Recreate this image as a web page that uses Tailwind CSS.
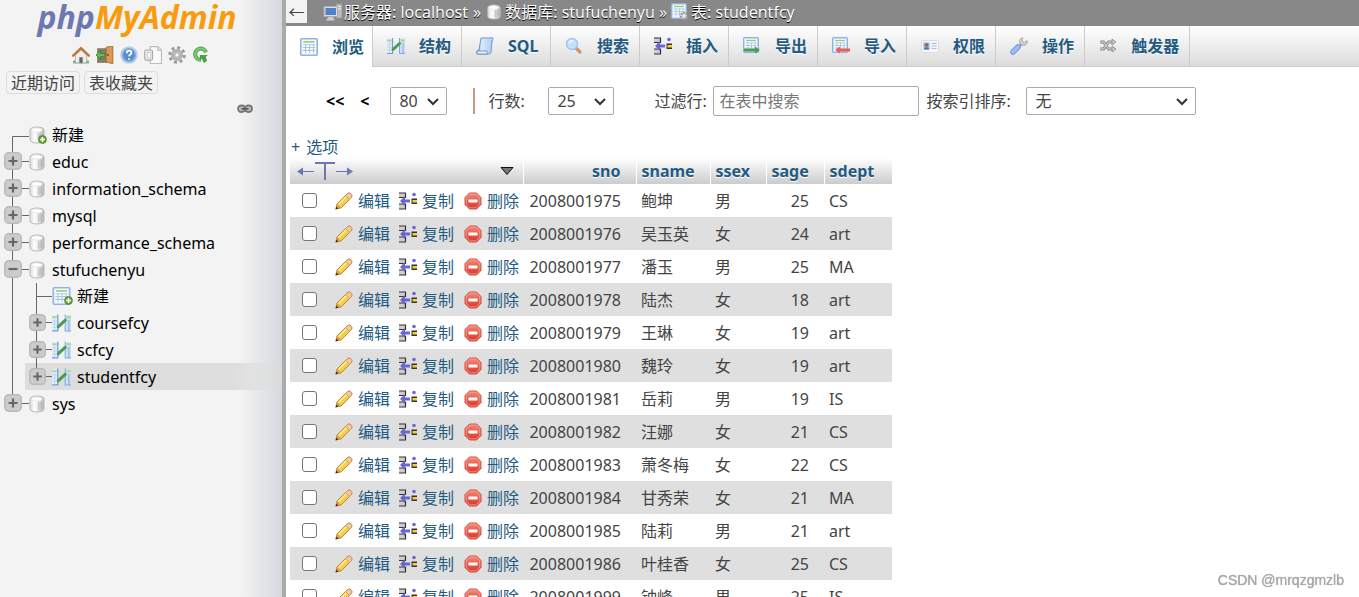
<!DOCTYPE html>
<html lang="zh-CN">
<head>
    <meta charset="UTF-8">
    <meta name="viewport" content="width=device-width, initial-scale=1.0">
    <title>localhost / stufuchenyu / studentfcy | phpMyAdmin</title>
    <script src="https://cdn.jsdelivr.net/npm/@tailwindcss/browser@4"></script>
    <style>
        body {
            font-family: 'Noto Sans', 'Noto Sans CJK SC', sans-serif;
        }
        .crumb {
            text-shadow: 0 1px 0 #000;
        }
        .light {
            text-shadow: 0 1px 0 #fff;
        }
        .watermark {
            font-family: 'Liberation Sans', sans-serif;
            text-shadow: 0 0 1px #999;
        }
    </style>
</head>
<body class="bg-white text-base leading-6 text-[#444]">
    <!-- Icon sprite -->
    <svg class="absolute size-0">
        <defs>
            <linearGradient id="g-cyl"><stop offset="0" stop-color="#dcdcdc"/><stop offset=".35" stop-color="#fff"/><stop offset="1" stop-color="#b4b4b4"/></linearGradient>
            <linearGradient id="g-red" x2="0" y2="1"><stop offset="0" stop-color="#f58a78"/><stop offset="1" stop-color="#d93324"/></linearGradient>
            <linearGradient id="g-page"><stop offset="0" stop-color="#6b9bdc"/><stop offset=".3" stop-color="#dcebfb"/><stop offset="1" stop-color="#a9cbf2"/></linearGradient>
        </defs>
        <symbol id="i-home" viewBox="0 0 16 16">
            <path d="M1 13h14v2.500H1z" fill="#6db56a"/><path d="M3 8l5-5 5 5v7H3z" fill="#eee" stroke="#999" stroke-width=".6"/><path d="M6.500 10h3v5h-3z" fill="#666"/><path d="M1 8.500L8 2l7 6.500" fill="none" stroke="#ba7a3b" stroke-width="2.200" stroke-linecap="round"/>
        </symbol>
        <symbol id="i-exit" viewBox="0 0 16 16">
            <path d="M1 2h9v13H1z" fill="#8b7965"/><path d="M9 1l6-1v16l-6-2z" fill="#d89a56" stroke="#9d6427" stroke-width=".7"/><circle cx="10.500" cy="8" r=".8" fill="#6b4315"/><path d="M0 8l4-4v2.500h4v3H4V12z" fill="#5dbb59" stroke="#2e7d32" stroke-width=".7"/>
        </symbol>
        <symbol id="i-help" viewBox="0 0 16 16">
            <circle cx="8" cy="8" r="7" fill="#7fa9de" stroke="#b4cdec" stroke-width="1.500"/><circle cx="8" cy="8" r="5" fill="#5a8ccc"/><path d="M6 6.500c0-3 4.200-3 4.200-.5 0 1.500-2.200 1.500-2.200 3.200M8 10.800v1.400" fill="none" stroke="#fff" stroke-width="1.600"/>
        </symbol>
        <symbol id="i-docs" viewBox="0 0 16 16">
            <path d="M5.500.5h7l3 3v12h-10z" fill="#fafafa" stroke="#bbb"/><path d="M12 .5v3.500h3.500" fill="#ddd" stroke="#bbb" stroke-width=".7"/><rect x=".6" y="3.500" width="7" height="9" rx="1.500" fill="#eee" stroke="#aaa"/><path d="M3 5.500h3v5H3z" fill="#fff" stroke="#bbb" stroke-width=".7"/>
        </symbol>
        <symbol id="i-gear" viewBox="0 0 16 16">
            <circle cx="8" cy="8" r="6.500" fill="none" stroke="#999" stroke-width="2.600" stroke-dasharray="2.600 2.500"/><circle cx="8" cy="8" r="4" fill="#eee" stroke="#b2b2b2" stroke-width="2.800"/><circle cx="8" cy="8" r="2" fill="#fafafa" stroke="#888" stroke-width=".7"/>
        </symbol>
        <symbol id="i-reload" viewBox="0 0 16 16">
            <path d="M12.500 5.500A5 5 0 1 0 8 12.300" fill="none" stroke="#4fa34c" stroke-width="3.600"/><path d="M12.500 5.500A5 5 0 1 0 8 12.300" fill="none" stroke="#7fcb7a" stroke-width="1.800"/><path d="M7 8h7l-1.800 1.800 1.300 3.200-3 2-1.700-3.600L7 13z" fill="#49a046"/>
        </symbol>
        <symbol id="i-link" viewBox="0 0 16 10">
            <rect x="1" y="1.500" width="7" height="6.500" rx="3.200" fill="#bbb" stroke="#777" stroke-width="1.800"/><rect x="8" y="1.500" width="7" height="6.500" rx="3.200" fill="#bbb" stroke="#777" stroke-width="1.800"/><path d="M4.500 4.800h7" stroke="#555" stroke-width="1.600"/>
        </symbol>
        <symbol id="i-db" viewBox="0 0 16 18">
            <path d="M1 4c0-4 14-4 14 0v10c0 4-14 4-14 0z" fill="url(#g-cyl)" stroke="#b9b9b9"/><ellipse cx="8" cy="4" rx="5.500" ry="2" fill="#fff" stroke="#ddd" stroke-width=".6"/><path d="M9 7.500h1.500v7H9zM11.500 7H13v7h-1.500z" fill="#aaa" opacity=".5"/>
        </symbol>
        <symbol id="i-add" viewBox="0 0 10 10">
            <circle cx="5" cy="5" r="4.400" fill="#6a9f3e" stroke="#4b7d26" stroke-width=".8"/><path d="M5 2.300v5.400M2.300 5h5.400" stroke="#fff" stroke-width="1.700"/>
        </symbol>
        <symbol id="i-table" viewBox="0 0 16 16">
            <rect x=".6" y=".6" width="14.800" height="14.800" rx="1" fill="#d4e4f8" stroke="#8db2e3" stroke-width="1.200"/><path d="M2 2h12v12H2z" fill="#fff"/><path d="M3 3.500h10" stroke="#93cf7b" stroke-width="1.500"/><path d="M2.500 6h11M2.500 8.500h11M2.500 11h11M5 5.500v8M8.500 5.500v8M12 5.500v8" stroke="#a7c3e6" stroke-width=".9"/>
        </symbol>
        <symbol id="i-struct" viewBox="0 0 18 16">
            <path d="M0 .5h6v15H0z" fill="#e6f0fc"/><path d="M5.500 0v15.500M0 15.500h6" stroke="#6c9be0" stroke-width="1.200"/><path d="M12.500.5H18v15h-5.500z" fill="#cfe0f7"/><path d="M12.500 0v15.500H18M16 5v10" stroke="#7fa8e2" fill="none"/><path d="M0 2.500h4.500M13.500 2.500H18" stroke="#a4dc93" stroke-width="2"/><path d="M0 6h5M0 9h5M0 12h5M2.500 4v11M13 6h5M13 9h5" stroke="#b8cfeb" stroke-width=".8"/><path d="M6 11.500l6.500-6" stroke="#4f9b4d" stroke-width="3" stroke-linecap="round"/>
        </symbol>
        <symbol id="i-sql" viewBox="0 0 18 18">
            <path d="M5 1h12l-1 3-1 11c0 2-2 2-3 2H1c-1-2 0-4 2-4z" fill="url(#g-page)" stroke="#6b97d2"/><path d="M1 14h10c0 2 1 3 1 3H1z" fill="#e7f2fd" stroke="#6b97d2"/><path d="M15 1c2 0 2.500 3 1 3" fill="#fff" stroke="#6b97d2"/>
        </symbol>
        <symbol id="i-search" viewBox="0 0 18 18">
            <path d="M11 11l4 4" stroke="#c99a6b" stroke-width="3.200" stroke-linecap="round"/><circle cx="7" cy="7" r="5.500" fill="#c6e0fb" stroke="#a3c3ec" stroke-width="1.400"/><path d="M4 6.500c.5-2 2-3 4-2.500" stroke="#fff" stroke-width="1.300" fill="none"/>
        </symbol>
        <symbol id="i-insert" viewBox="0 0 18 18">
            <path d="M0 1h6.500v4.500H0M0 12h6.500v5H0" fill="#ccc"/><path d="M0 1h6.500v4.500H0M0 12h6.500v5H0" fill="none" stroke="#333" stroke-width="1.200"/><path d="M1 9l5-5v3.500h5v3H6V14z" fill="#6c66d2"/><circle cx="15" cy="2.500" r="1.800" fill="#6c66d2"/><path d="M12.500 6.500H18v5.500h-5.500z" fill="#333"/><path d="M13.500 8H18v2.500h-4.500z" fill="#fc3"/>
        </symbol>
        <symbol id="i-edit" viewBox="0 0 18 18">
            <path d="M1 16.500L2 12 12 2c3-2.500 6.500 1 4 4L6 16z" fill="#f3cf4b" stroke="#bb862c"/><path d="M3.500 12.500L12.500 3.500" stroke="#fff0a0" stroke-width="1.500"/><path d="M12 2c3-2.500 6.500 1 4 4l-1.500 1.500-4-4z" fill="#f1c89f" stroke="#c88d58" stroke-width=".7"/><path d="M.5 17.500L2 12l4.500 4z" fill="#d6a052"/><path d="M.5 17.500l.8-3 2.300 2.200z" fill="#4b3213"/>
        </symbol>
        <symbol id="i-drop" viewBox="0 0 18 18">
            <path d="M5.500 1h7L17 5.500v7L12.500 17h-7L1 12.500v-7z" fill="url(#g-red)" stroke="#cf5145"/><path d="M6 2.200h6l3.800 3.800v6L12 15.800H6L2.200 12V6z" fill="none" stroke="#f7a59a" stroke-width=".8"/><path d="M4.500 7.500h9v3h-9z" fill="#fff"/>
        </symbol>
        <symbol id="i-export" viewBox="0 0 18 18">
            <use href="#i-table" width="16" height="16"/><path d="M1 11.500h11V9.500l5 3.500-5 3.500v-2H1z" fill="#4f9c4d"/>
        </symbol>
        <symbol id="i-import" viewBox="0 0 18 18">
            <use href="#i-table" width="16" height="16"/><path d="M18 11.500H8v-2L3 13l5 3.500v-2h10z" fill="#ee5c55"/>
        </symbol>
        <symbol id="i-priv" viewBox="0 0 18 18">
            <rect x=".5" y="3.500" width="17" height="12" rx="1" fill="#f6f6f6" stroke="#ddd"/><path d="M2.500 5.500h6v7h-6z" fill="#8ab6ea"/><circle cx="5.500" cy="8" r="1.800" fill="#9a6238"/><path d="M3 12.500c0-3 5-3 5 0z" fill="#4673b5"/><path d="M10.500 6.500h5M10.500 9h5M10.500 11.500h5" stroke="#a9bfdb"/>
        </symbol>
        <symbol id="i-ops" viewBox="0 0 18 18">
            <path d="M9.500 9l3-3" stroke="#aaa" stroke-width="3"/><path d="M13 .8c-3 .3-4 3-3 5.200 1 2.300 4 3 6 1.500 1.200-1 1.500-2.500 1-4l-2.500 2-2-.8-.4-2z" fill="#d3d3d3" stroke="#999" stroke-width=".8"/><path d="M3 15l5-5" stroke="#6e95dc" stroke-width="5.500" stroke-linecap="round"/><path d="M3 15l5-5" stroke="#9fbdf2" stroke-width="3.600" stroke-linecap="round"/>
        </symbol>
        <symbol id="i-trigger" viewBox="0 0 18 18">
            <path d="M1 5h3.500l5 7H14M1 12h3.500l5-7H14" fill="none" stroke="#888" stroke-width="2.800"/><path d="M1 5h3.500l5 7H14M1 12h3.500l5-7H14" fill="none" stroke="#ddd" stroke-width="1"/><path d="M13 2l4 3-4 3zM13 9l4 3-4 3z" fill="#ccc" stroke="#888" stroke-width=".8"/>
        </symbol>
        <symbol id="i-server" viewBox="0 0 20 18">
            <path d="M13 1h6v14h-6z" fill="#bbb" stroke="#999" stroke-width=".8"/><path d="M14 3.500h4M14 6h4" stroke="#eee"/><path d="M1 3.500h13.500v10H1z" fill="#ddd" stroke="#aaa"/><path d="M2.500 5h10.500V12H2.500z" fill="#4f80cb"/><path d="M3 17.500h9l-2-3.500H5.500z" fill="#ccc"/>
        </symbol>
        <symbol id="i-prop" viewBox="0 0 18 18">
            <use href="#i-table" width="16" height="16"/><circle cx="13" cy="13" r="3" fill="#eee" stroke="#999" stroke-width="2.500" stroke-dasharray="1.800 .8"/>
        </symbol>
        <symbol id="box-plus" viewBox="0 0 18 18">
            <rect x=".8" y=".8" width="16.400" height="16.400" rx="4" fill="#ccc" stroke="#b9b9b9" stroke-width="1.500"/><path d="M9 4.500v9M4.500 9h9" stroke="#666" stroke-width="2.200"/>
        </symbol>
        <symbol id="box-minus" viewBox="0 0 18 18">
            <rect x=".8" y=".8" width="16.400" height="16.400" rx="4" fill="#ccc" stroke="#b9b9b9" stroke-width="1.500"/><path d="M4.500 9h9" stroke="#666" stroke-width="2.200"/>
        </symbol>
        <!-- Tree branches: outer level is 25 wide, inner level 27 -->
        <symbol id="t-first" viewBox="0 0 25 27"><path d="M8.500 27V14.500H25" fill="none" stroke="#666"/></symbol>
        <symbol id="t-plus" viewBox="0 0 25 27"><path d="M8.500 0v27M8 13.500h17" fill="none" stroke="#666"/><use href="#box-plus" y="4" width="18" height="18"/></symbol>
        <symbol id="t-minus" viewBox="0 0 25 27"><path d="M8.500 0v27M8 13.500h17" fill="none" stroke="#666"/><use href="#box-minus" y="4" width="18" height="18"/></symbol>
        <symbol id="t-last" viewBox="0 0 25 27"><path d="M8.500 0v13.500H25" fill="none" stroke="#666"/><use href="#box-plus" y="4" width="18" height="18"/></symbol>
        <symbol id="t-pipe" viewBox="0 0 21 27"><path d="M8.500 0v27" stroke="#666"/></symbol>
        <symbol id="t2-tee" viewBox="0 0 27 27"><path d="M11.500 0v27M11 13.500h16" stroke="#666"/></symbol>
        <symbol id="t2-plus" viewBox="0 0 27 27"><path d="M11.500 0v27M11 13.500h16" stroke="#666"/><use href="#box-plus" x="4" y="5" width="17" height="17"/></symbol>
        <symbol id="t2-last" viewBox="0 0 27 27"><path d="M11.500 0v13.500H27" fill="none" stroke="#666"/><use href="#box-plus" x="4" y="5" width="17" height="17"/></symbol>
    </svg>

    <div class="flex h-screen overflow-hidden">
        <!-- Navigation panel -->
        <aside class="w-[286px] shrink-0 border-r-4 border-[#aaa] bg-linear-to-r from-[#f3f3f3] from-85% to-[#d6d9dc]">
            <a href="#" class="block h-[46px] pr-2 text-center text-[32px] leading-[34px] font-bold italic text-[#6c78af]" style="font-family: 'Open Sans', sans-serif">php<span class="text-[#f89c0e]">MyAdmin</span></a>
            <nav class="flex justify-center gap-[6px]">
                <a href="#" aria-label="主页"><svg class="size-[18px]"><use href="#i-home"/></svg></a>
                <a href="#" aria-label="退出"><svg class="size-[18px]"><use href="#i-exit"/></svg></a>
                <a href="#" aria-label="phpMyAdmin 文档"><svg class="size-[18px]"><use href="#i-help"/></svg></a>
                <a href="#" aria-label="文档"><svg class="size-[18px]"><use href="#i-docs"/></svg></a>
                <a href="#" aria-label="设置"><svg class="size-[18px]"><use href="#i-gear"/></svg></a>
                <a href="#" aria-label="刷新"><svg class="size-[18px]"><use href="#i-reload"/></svg></a>
            </nav>
            <div class="mt-[7px] flex gap-1 px-[6px]">
                <button class="h-[23px] rounded border border-[#ddd] px-1 leading-5">近期访问</button>
                <button class="h-[23px] rounded border border-[#ddd] px-1 leading-5">表收藏夹</button>
            </div>
            <div class="mt-[10px] flex justify-end pr-[29px]">
                <button aria-label="链接"><svg class="h-[10px] w-4"><use href="#i-link"/></svg></button>
            </div>
            <ul id="tree" class="mt-2 text-black"></ul>
        </aside>

        <main class="min-w-0 flex-1">
            <!-- Breadcrumb -->
            <div class="crumb flex h-[26px] items-center bg-[#888] pb-[2px] text-white">
                <button class="mb-px h-[23px] w-[21px] bg-[#f3f3f3] leading-4 text-[#444]" style="text-shadow: none">←</button>
                <svg class="ml-4 h-[18px] w-5"><use href="#i-server"/></svg>
                <a href="#" class="ml-px">服务器: localhost</a><span class="mx-[5px]">»</span>
                <svg class="mr-[3px] h-4 w-4"><use href="#i-db"/></svg>
                <a href="#">数据库: stufuchenyu</a><span class="mx-1">»</span>
                <svg class="mr-[2px] size-[18px]"><use href="#i-prop"/></svg>
                <a href="#">表: studentfcy</a>
            </div>

            <!-- Tabs -->
            <nav id="tabs" class="light flex h-[41px] border-b border-[#ccc] bg-linear-to-b from-white to-[#dcdcdc] font-bold text-[#235a81]"></nav>

            <!-- Result navigation -->
            <form class="flex h-[68px] items-center pl-10">
                <button type="button" class="font-bold text-black">&lt;&lt;</button>
                <button type="button" class="ml-4 font-bold text-black">&lt;</button>
                <div class="relative ml-[21px]">
                    <select aria-label="页码" class="h-7 w-[57px] appearance-none rounded-[2px] border border-[#aaa] bg-white pl-2"><option>80</option></select>
                    <svg class="pointer-events-none absolute top-[11px] right-2 h-2 w-3"><path d="M1 1l5 5 5-5" fill="none" stroke="#333" stroke-width="2"/></svg>
                </div>
                <span class="ml-[26px] h-[26px] w-[2px] bg-[#c49a86]"></span>
                <label for="rows" class="ml-[13px] w-[60px]">行数:</label>
                <div class="relative">
                    <select id="rows" class="h-7 w-[66px] appearance-none rounded-[2px] border border-[#aaa] bg-white pl-2"><option>25</option></select>
                    <svg class="pointer-events-none absolute top-[11px] right-2 h-2 w-3"><path d="M1 1l5 5 5-5" fill="none" stroke="#333" stroke-width="2"/></svg>
                </div>
                <label for="filter" class="ml-10 w-[59px]">过滤行:</label>
                <input id="filter" type="text" placeholder="在表中搜索" class="h-[30px] w-[206px] rounded-[2px] border border-[#aaa] px-[5px] placeholder:text-[#777]">
                <label for="sort" class="ml-[7px] w-[100px]">按索引排序:</label>
                <div class="relative">
                    <select id="sort" class="h-7 w-[170px] appearance-none rounded-[2px] border border-[#aaa] bg-white pl-2"><option>无</option></select>
                    <svg class="pointer-events-none absolute top-[11px] right-2 h-2 w-3"><path d="M1 1l5 5 5-5" fill="none" stroke="#333" stroke-width="2"/></svg>
                </div>
            </form>

            <a href="#" class="flex h-[23px] gap-[6px] pl-[5px] text-[#235a81]"><span>+</span>选项</a>

            <!-- Result table -->
            <table class="ml-1 w-[602px] table-fixed">
                <colgroup>
                    <col class="w-[233px]"><col class="w-[113px]"><col class="w-[74px]"><col class="w-[56px]"><col class="w-[58px]"><col class="w-[68px]">
                </colgroup>
                <thead>
                    <tr class="light h-[26px] bg-linear-to-b from-white to-[#ccc] text-left text-[#235a81]">
                        <th class="border-r border-white p-0">
                            <div class="flex items-center justify-between pr-[9px] pl-[7px]">
                                <svg class="h-5 w-14" viewBox="0 0 56 20"><path d="M4 10.500h13M39 10.500h13" stroke="#6c78af"/><path d="M0 10.500l6-4v8zM56 10.500l-6-4v8z" fill="#6c78af"/><path d="M18 2h20M28 2v17" stroke="#6c78af" stroke-width="2"/></svg>
                                <svg class="h-2 w-[14px]" viewBox="0 0 14 8"><path d="M1 .5h12L7 7.500z" fill="#777" stroke="#111"/></svg>
                            </div>
                        </th>
                        <th class="border-r border-white pr-[15px] text-right">sno</th>
                        <th class="border-r border-white pl-[5px]">sname</th>
                        <th class="border-r border-white pl-[5px]">ssex</th>
                        <th class="border-r border-white pl-[5px]">sage</th>
                        <th class="border-r border-white pl-[5px]">sdept</th>
                    </tr>
                </thead>
                <tbody id="rows-body"></tbody>
            </table>
        </main>
    </div>

    <div class="watermark fixed right-[15px] bottom-[7px] text-sm leading-5 text-[#aaa]">CSDN @mrqzgmzlb</div>

    <script>
        const tree = [
            { name: '新建', branch: 't-first', isNew: true },
            { name: 'educ', branch: 't-plus' },
            { name: 'information_schema', branch: 't-plus' },
            { name: 'mysql', branch: 't-plus' },
            { name: 'performance_schema', branch: 't-plus' },
            { name: 'stufuchenyu', branch: 't-minus' },
            { name: '新建', branch: 't2-tee', nested: true, isNew: true },
            { name: 'coursefcy', branch: 't2-plus', nested: true },
            { name: 'scfcy', branch: 't2-plus', nested: true },
            { name: 'studentfcy', branch: 't2-last', nested: true, selected: true },
            { name: 'sys', branch: 't-last' }
        ];
        const tabs = [
            ['浏览', 'i-table'], ['结构', 'i-struct'], ['SQL', 'i-sql'], ['搜索', 'i-search'], ['插入', 'i-insert'],
            ['导出', 'i-export'], ['导入', 'i-import'], ['权限', 'i-priv'], ['操作', 'i-ops'], ['触发器', 'i-trigger']
        ];
        const students = [
            ['2008001975', '鲍坤', '男', 25, 'CS'],
            ['2008001976', '吴玉英', '女', 24, 'art'],
            ['2008001977', '潘玉', '男', 25, 'MA'],
            ['2008001978', '陆杰', '女', 18, 'art'],
            ['2008001979', '王琳', '女', 19, 'art'],
            ['2008001980', '魏玲', '女', 19, 'art'],
            ['2008001981', '岳莉', '男', 19, 'IS'],
            ['2008001982', '汪娜', '女', 21, 'CS'],
            ['2008001983', '萧冬梅', '女', 22, 'CS'],
            ['2008001984', '甘秀荣', '女', 21, 'MA'],
            ['2008001985', '陆莉', '男', 21, 'art'],
            ['2008001986', '叶桂香', '女', 25, 'CS'],
            ['2008001999', '钟峰', '男', 25, 'IS']
        ];

        const addBadge = '<svg class="absolute -right-[2px] bottom-0 size-[9px]"><use href="#i-add"/></svg>';

        document.getElementById('tree').innerHTML = tree.map(n => {
            const height = n.isNew ? 'h-[26px]' : 'h-[27px]';
            const badge = n.isNew ? addBadge : '';
            if (n.nested) {
                const icon = n.isNew ? '#i-table' : '#i-struct';
                return `
                    <li class="flex ${height} overflow-hidden pl-1">
                        <svg class="h-[27px] w-[21px] shrink-0"><use href="#t-pipe"/></svg>
                        <div class="flex flex-1 items-center ${n.selected ? 'bg-linear-to-r from-[#ddd] from-80% to-[#ddd]/30' : ''}">
                            <svg class="h-[27px] w-[27px] shrink-0"><use href="#${n.branch}"/></svg>
                            <span class="relative mr-[6px]"><svg class="h-[18px] w-[19px]"><use href="${icon}"/></svg>${badge}</span>
                            <a href="#">${n.name}</a>
                        </div>
                    </li>`;
            }
            return `
                <li class="flex ${height} items-center overflow-hidden pl-1">
                    <svg class="h-[27px] w-[25px] shrink-0"><use href="#${n.branch}"/></svg>
                    <span class="relative mr-[7px]"><svg class="h-[18px] w-4"><use href="#i-db"/></svg>${badge}</span>
                    <a href="#">${n.name}</a>
                </li>`;
        }).join('');

        document.getElementById('tabs').innerHTML = tabs.map(([name, icon], i) => `
            <a href="#" class="flex items-center gap-[14px] border-r border-[#ccc] pl-[14px] ${i === 0 ? '-mb-px bg-white pr-2' : 'min-w-[89px] pr-[10px]'}">
                <svg class="size-[18px]"><use href="#${icon}"/></svg>${name}
            </a>`).join('');

        document.getElementById('rows-body').innerHTML = students.map(([sno, sname, ssex, sage, sdept]) => `
            <tr class="h-[33px] even:bg-[#dfdfdf]">
                <td class="p-0">
                    <div class="flex items-center pl-3 text-[#235a81]">
                        <input type="checkbox" aria-label="${sno}" class="mr-[18px] size-[15px] appearance-none rounded-[3px] border border-[#767676] bg-white">
                        <a href="#" class="mr-[9px] flex items-center gap-[5px]"><svg class="size-[18px]"><use href="#i-edit"/></svg>编辑</a>
                        <a href="#" class="mr-[10px] flex items-center gap-[5px]"><svg class="size-[18px]"><use href="#i-insert"/></svg>复制</a>
                        <a href="#" class="flex items-center gap-[5px]"><svg class="size-[18px]"><use href="#i-drop"/></svg>删除</a>
                    </div>
                </td>
                <td class="pr-[15px] text-right">${sno}</td>
                <td class="pl-[5px]">${sname}</td>
                <td class="pl-[5px]">${ssex}</td>
                <td class="pr-[15px] text-right">${sage}</td>
                <td class="pl-[5px]">${sdept}</td>
            </tr>`).join('');
    </script>
</body>
</html>
